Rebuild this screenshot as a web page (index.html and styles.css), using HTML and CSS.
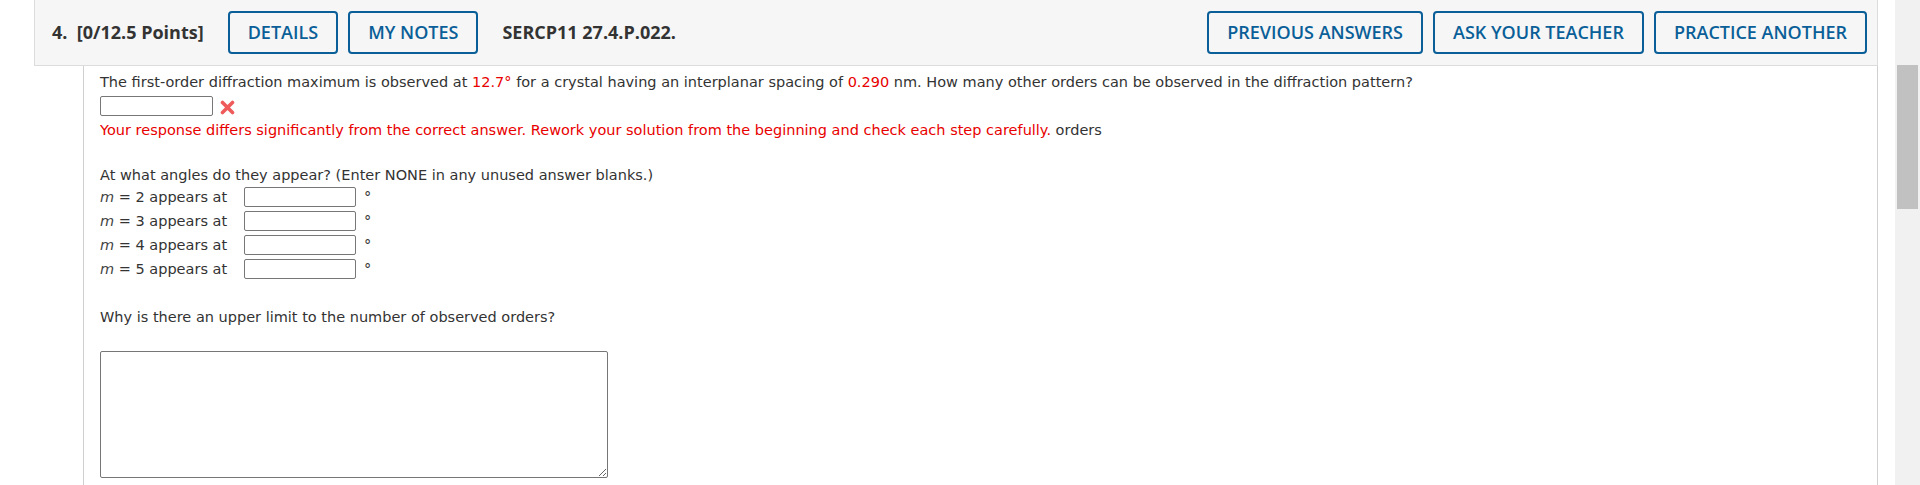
FILE: index.html
```html
<!DOCTYPE html>
<html lang="en">
<head>
<meta charset="utf-8">
<title>SERCP11 27.4.P.022</title>
<link rel="stylesheet" href="styles.css">
</head>
<body>
<div class="page">
  <div class="main">
    <div class="qhead">
      <div class="qtitle">4.&nbsp; [0/12.5 Points]</div>
      <div class="btn-group">
        <button class="btn">DETAILS</button>
        <button class="btn">MY NOTES</button>
      </div>
      <div class="qcode">SERCP11 27.4.P.022.</div>
      <div class="btn-group right">
        <button class="btn">PREVIOUS ANSWERS</button>
        <button class="btn">ASK YOUR TEACHER</button>
        <button class="btn">PRACTICE ANOTHER</button>
      </div>
    </div>
    <div class="qbody">
      <p class="line">The first-order diffraction maximum is observed at <span class="val">12.7°</span> for a crystal having an interplanar spacing of <span class="val">0.290</span> nm. How many other orders can be observed in the diffraction pattern?</p>
      <div class="ans-row">
        <input class="ans first" type="text">
        <svg class="wrong" width="15" height="15" viewBox="0 0 15 15" aria-hidden="true"><path d="M2.5 2.5 L12.5 12.5 M12.5 2.5 L2.5 12.5" stroke="#ef5b5b" stroke-width="3.6" stroke-linecap="round" fill="none"/></svg>
      </div>
      <p class="line"><span class="feedback">Your response differs significantly from the correct answer. Rework your solution from the beginning and check each step carefully.</span> orders</p>
      <p class="line gap">At what angles do they appear? (Enter NONE in any unused answer blanks.)</p>
      <div class="angle-row"><span class="lbl"><i>m</i> = 2 appears at</span><input class="ans" type="text"><span class="deg">°</span></div>
      <div class="angle-row"><span class="lbl"><i>m</i> = 3 appears at</span><input class="ans" type="text"><span class="deg">°</span></div>
      <div class="angle-row"><span class="lbl"><i>m</i> = 4 appears at</span><input class="ans" type="text"><span class="deg">°</span></div>
      <div class="angle-row"><span class="lbl"><i>m</i> = 5 appears at</span><input class="ans" type="text"><span class="deg">°</span></div>
      <p class="line gap2">Why is there an upper limit to the number of observed orders?</p>
      <textarea class="essay"></textarea>
    </div>
  </div>
  <div class="scrollbar"><div class="thumb"></div></div>
</div>
</body>
</html>
```
FILE: styles.css
```css
html, body {
  margin: 0;
  padding: 0;
  height: 485px;
  overflow: hidden;
  background: #fff;
}

.page {
  display: flex;
  height: 485px;
}

.main {
  flex: 1;
  padding: 0 17px 0 34px;
  display: flex;
  flex-direction: column;
}

.qhead {
  height: 65px;
  flex: none;
  border: 1px solid #dcdcdc;
  border-top: none;
  background: #f6f6f6;
  display: flex;
  align-items: center;
  padding: 0 10px 1px 17px;
  box-sizing: border-box;
  height: 66px;
  font-family: "Open Sans", "Liberation Sans", sans-serif;
  color: #333;
}

.qtitle {
  font-size: 18px;
  font-weight: 700;
  margin-right: 24px;
  white-space: pre;
}

.qcode {
  font-size: 18px;
  font-weight: 700;
  margin-left: 24px;
}

.btn-group {
  display: flex;
  gap: 10px;
}

.btn-group.right {
  margin-left: auto;
}

.btn {
  height: 43px;
  padding: 0 18px;
  border: 2px solid #0a5f98;
  border-radius: 4px;
  background: #f6f6f6;
  color: #0a5f98;
  font-family: "Open Sans", "Liberation Sans", sans-serif;
  font-size: 18px;
  font-weight: 600;
  line-height: 1;
}

.qbody {
  flex: 1;
  border-left: 1px solid #cfcfcf;
  border-right: 1px solid #cfcfcf;
  margin-left: 49px;
  padding: 6px 16px 0;
  font-family: "DejaVu Sans", Verdana, sans-serif;
  font-size: 14.5px;
  color: #333;
}

.line {
  margin: 0;
  line-height: 20px;
}

.val,
.feedback {
  color: #e80000;
}

.ans-row {
  display: flex;
  align-items: center;
  height: 24px;
  margin: 2px 0;
}

.ans {
  box-sizing: border-box;
  width: 112px;
  height: 20px;
  border: 1px solid #777;
  border-radius: 2px;
  margin: 0;
  padding: 0 3px;
  background: #fff;
}

.ans.first {
  width: 113px;
}

.wrong {
  margin-left: 7px;
  margin-top: 2px;
}

.gap {
  margin-top: 25px;
}

.angle-row {
  display: flex;
  align-items: center;
  height: 24px;
  line-height: 20px;
}

.lbl {
  width: 144px;
}

.lbl i {
  color: #444;
}

.deg {
  margin-left: 8px;
  align-self: flex-start;
  margin-top: 2px;
}

.gap2 {
  margin-top: 26px;
}

.essay {
  display: block;
  box-sizing: border-box;
  width: 508px;
  height: 127px;
  margin-top: 24px;
  border: 1px solid #767676;
  border-radius: 2px;
  padding: 2px;
  resize: both;
  font-family: "DejaVu Sans", Verdana, sans-serif;
  font-size: 13px;
}

.scrollbar {
  width: 25px;
  background: #f1f1f1;
  flex: none;
}

.thumb {
  margin: 65px 2px 0;
  height: 144px;
  background: #c1c1c1;
}
```
